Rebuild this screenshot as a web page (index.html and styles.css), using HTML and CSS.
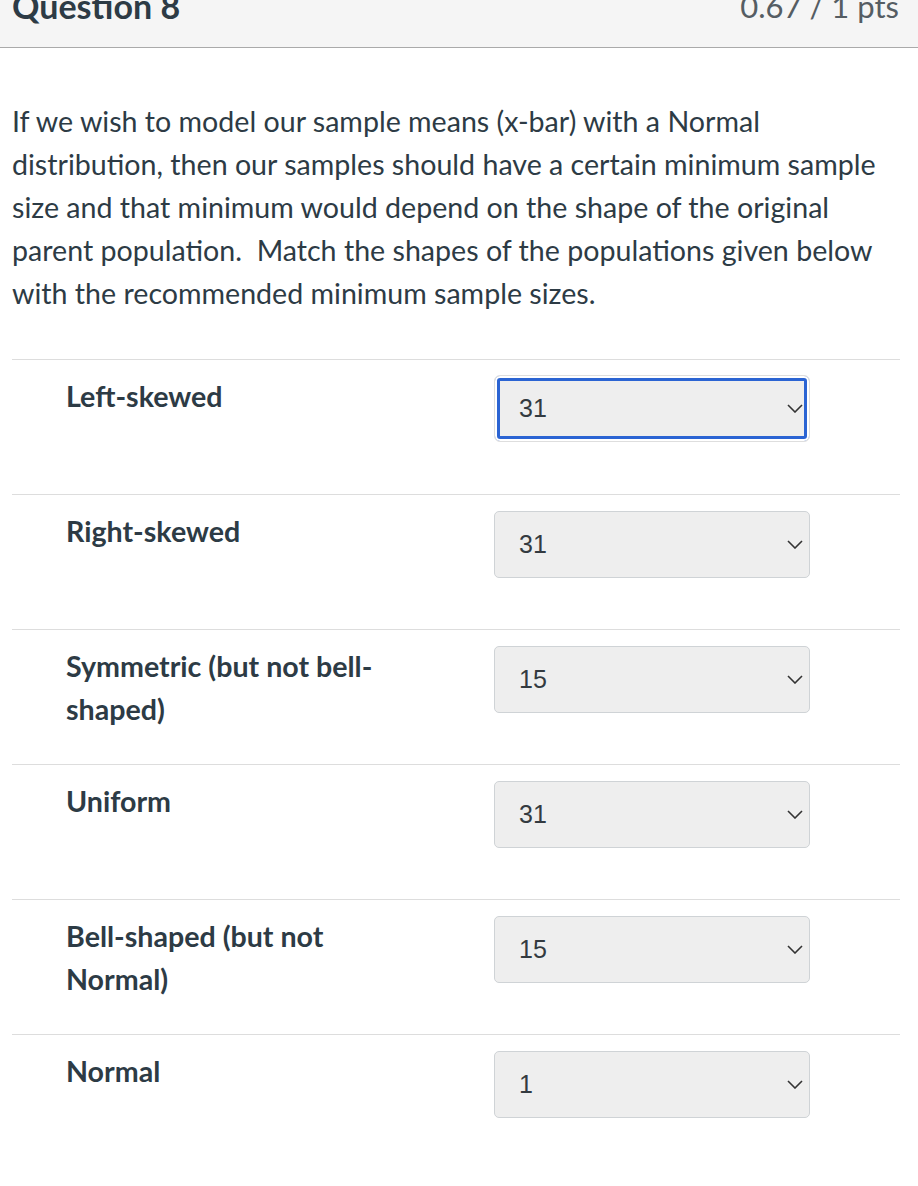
FILE: index.html
```html
<!DOCTYPE html>
<html lang="en">
<head>
    <meta charset="UTF-8">
    <meta name="viewport" content="width=device-width, initial-scale=1.0">
    <title>Question 8</title>
    <link rel="stylesheet" href="styles.css">
</head>
<body>
    <div class="question-header">
        <span class="question-name">Question 8</span>
        <span class="question-points">0.67 / 1 pts</span>
    </div>

    <div class="question-text">
        <p>If we wish to model our sample means (x-bar) with a Normal distribution, then our samples should have a certain minimum sample size and that minimum would depend on the shape of the original parent population.&nbsp; Match the shapes of the populations given below with the recommended minimum sample sizes.</p>
    </div>

    <div class="answers">
        <div class="answer-row">
            <div class="answer-label">Left-skewed</div>
            <div class="select focused">
                <span class="select-value">31</span>
                <svg class="chevron" width="16" height="9" viewBox="0 0 16 9"><path d="M1 1 L8 8 L15 1" fill="none" stroke="#333" stroke-width="1.6"/></svg>
            </div>
        </div>

        <div class="answer-row">
            <div class="answer-label">Right-skewed</div>
            <div class="select">
                <span class="select-value">31</span>
                <svg class="chevron" width="16" height="9" viewBox="0 0 16 9"><path d="M1 1 L8 8 L15 1" fill="none" stroke="#333" stroke-width="1.6"/></svg>
            </div>
        </div>

        <div class="answer-row">
            <div class="answer-label">Symmetric (but not bell-shaped)</div>
            <div class="select">
                <span class="select-value">15</span>
                <svg class="chevron" width="16" height="9" viewBox="0 0 16 9"><path d="M1 1 L8 8 L15 1" fill="none" stroke="#333" stroke-width="1.6"/></svg>
            </div>
        </div>

        <div class="answer-row">
            <div class="answer-label">Uniform</div>
            <div class="select">
                <span class="select-value">31</span>
                <svg class="chevron" width="16" height="9" viewBox="0 0 16 9"><path d="M1 1 L8 8 L15 1" fill="none" stroke="#333" stroke-width="1.6"/></svg>
            </div>
        </div>

        <div class="answer-row">
            <div class="answer-label">Bell-shaped (but not Normal)</div>
            <div class="select">
                <span class="select-value">15</span>
                <svg class="chevron" width="16" height="9" viewBox="0 0 16 9"><path d="M1 1 L8 8 L15 1" fill="none" stroke="#333" stroke-width="1.6"/></svg>
            </div>
        </div>

        <div class="answer-row">
            <div class="answer-label">Normal</div>
            <div class="select">
                <span class="select-value">1</span>
                <svg class="chevron" width="16" height="9" viewBox="0 0 16 9"><path d="M1 1 L8 8 L15 1" fill="none" stroke="#333" stroke-width="1.6"/></svg>
            </div>
        </div>
    </div>
</body>
</html>
```

FILE: styles.css
```css
body {
    font-family: Lato, "Open Sans", sans-serif;
    color: #2d3b45;
    margin: 0;
    background-color: #fff;
}

.question-header {
    height: 47px;
    border-bottom: 1px solid #aaa;
    background-color: #f5f5f5;
    display: flex;
    justify-content: space-between;
    align-items: flex-start;
    padding: 0 19px 0 12px;
    overflow: hidden;
}

.question-name {
    font-size: 34px;
    font-weight: 700;
    line-height: 40px;
    margin-top: -14px;
}

.question-points {
    font-size: 31px;
    color: #555d63;
    line-height: 40px;
    margin-top: -14px;
}

.question-text {
    padding: 0 18px 0 12px;
}

.question-text p {
    font-size: 28.6px;
    line-height: 43px;
    margin: 52px 0 44px 0;
}

.answers {
    margin: 0 18px 0 12px;
}

.answer-row {
    border-top: 1px solid #ddd;
    min-height: 135px;
    box-sizing: border-box;
    display: grid;
    grid-template-columns: 330px 316px;
    column-gap: 98px;
    align-items: start;
    padding-left: 54px;
}

.answer-label {
    font-size: 28.6px;
    font-weight: 700;
    line-height: 43px;
    padding-top: 15px;
}

.select {
    margin-top: 16px;
    height: 67px;
    box-sizing: border-box;
    border: 1px solid #cfd3d6;
    border-radius: 5px;
    background-color: #eee;
    display: flex;
    align-items: center;
    justify-content: space-between;
    padding: 0 6px 0 24px;
}

.select.focused {
    margin-top: 15px;
    border-color: #dedede;
    border-radius: 6px;
    box-shadow: inset 0 0 0 2px #fff, inset 0 0 0 5px #2b64d3;
}

.select-value {
    font-family: "Liberation Sans", Arial, sans-serif;
    font-size: 25px;
    color: #333a40;
}

.chevron {
    display: block;
}
```
